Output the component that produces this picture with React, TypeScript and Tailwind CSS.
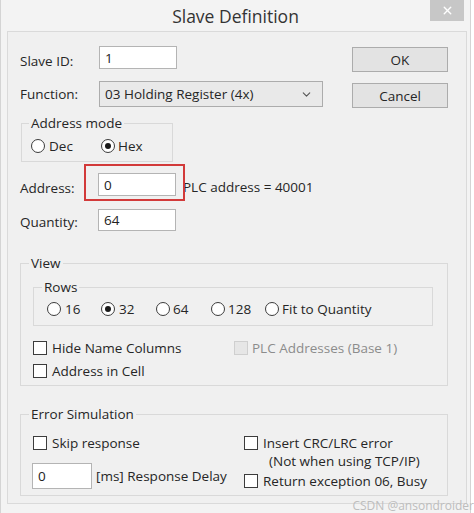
import { X, ChevronDown } from 'lucide-react';

function Radio({ checked = false }: { checked?: boolean }) {
  return (
    <span className="flex h-[14px] w-[14px] shrink-0 items-center justify-center rounded-full border border-[#3c3c3c] bg-white">
      {checked && <span className="h-[6px] w-[6px] rounded-full bg-[#1a1a1a]" />}
    </span>
  );
}

function Check({ disabled = false }: { disabled?: boolean }) {
  return (
    <span
      className={
        disabled
          ? 'block h-[14px] w-[14px] shrink-0 border border-[#cfcfcf] bg-[#e6e6e6]'
          : 'block h-[14px] w-[14px] shrink-0 border border-[#3c3c3c] bg-white'
      }
    />
  );
}

function Field({ value, w, h = 'h-[23px]' }: { value: string; w: string; h?: string }) {
  return (
    <div className={`${w} ${h} flex items-center border border-[#b4b4b4] bg-white pl-[5px] text-[#222]`}>{value}</div>
  );
}

export default function App() {
  return (
    <div className="relative h-[513px] w-[474px] overflow-hidden bg-white font-['Open_Sans',sans-serif] text-[13.5px] leading-[16px] text-[#262626]">
      <div className="h-[513px] w-[471px] border-r border-l border-[#d4d4d4] bg-[#f3f3f3]">
        {/* title bar */}
        <div className="relative flex h-[31px] items-center justify-center text-[17.5px] text-[#333]">
          Slave Definition
          <div className="absolute top-0 left-[429px] flex h-[21px] w-[34px] items-center justify-center bg-[#c7c7c7]">
            <X size={13} strokeWidth={2.6} color="#fff" />
          </div>
        </div>

        {/* client area */}
        <div className="ml-[6px] w-[460px] border border-[#dadada] bg-[#f0f0f0] pt-[14px] pr-[18px] pb-[7px] pl-[12px]">
          <div className="flex justify-between">
            <div>
              <div className="flex h-[23px]">
                <span className="mt-[7px] w-[79px]">Slave ID:</span>
                <Field value="1" w="w-[78px]" />
              </div>
              <div className="mt-[12px] flex h-[26px] items-center">
                <span className="w-[79px]">Function:</span>
                <div className="flex h-[26px] w-[224px] items-center justify-between border border-[#acacac] bg-[#e9e9e9] pr-[9px] pl-[5px]">
                  <span>03 Holding Register (4x)</span>
                  <ChevronDown size={13} strokeWidth={2} color="#555" />
                </div>
              </div>
            </div>
            <div className="mt-[1px] flex flex-col gap-[11px]">
              <div className="flex h-[25px] w-[96px] items-center justify-center border border-[#acacac] bg-[#e3e3e3]">OK</div>
              <div className="flex h-[25px] w-[96px] items-center justify-center border border-[#acacac] bg-[#e3e3e3]">Cancel</div>
            </div>
          </div>

          {/* address mode */}
          <fieldset className="mt-[7px] ml-[1px] w-[152px] border border-[#d9d9d9] pb-[7px] pl-[9px]">
            <legend className="-ml-[2px] px-[2px] leading-[16px]">Address mode</legend>
            <div className="mt-[7px] flex h-[16px] items-center">
              <div className="flex w-[70px] items-center gap-[4px]">
                <Radio />
                <span>Dec</span>
              </div>
              <div className="flex items-center gap-[3px]">
                <Radio checked />
                <span>Hex</span>
              </div>
            </div>
          </fieldset>

          {/* address */}
          <div className="mt-[11px] flex h-[23px] items-center">
            <span className="mt-[6px] w-[78px]">Address:</span>
            <div className="relative">
              <Field value="0" w="w-[78px]" />
              <div className="absolute top-[-9px] left-[-14px] h-[37px] w-[101px] border-2 border-[#d23a3a]" />
            </div>
            <span className="mt-[5px] ml-[7px]">PLC address = 40001</span>
          </div>

          {/* quantity */}
          <div className="mt-[13px] flex h-[22px] items-center">
            <span className="mt-[3px] w-[78px]">Quantity:</span>
            <Field value="64" w="w-[78px]" h="h-[22px]" />
          </div>

          {/* view */}
          <fieldset className="mt-[24px] border border-[#d9d9d9] pr-[14px] pb-[6px] pl-[12px]">
            <legend className="-ml-[4px] px-[2px] leading-[16px]">View</legend>
            <fieldset className="mt-[8px] border border-[#d9d9d9] pb-[8px] pl-[13px]">
              <legend className="-ml-[5px] px-[2px] leading-[16px]">Rows</legend>
              <div className="mt-[6px] flex h-[16px] items-center">
                <div className="flex w-[54px] items-center gap-[4px]">
                  <Radio />
                  <span>16</span>
                </div>
                <div className="flex w-[55px] items-center gap-[4px]">
                  <Radio checked />
                  <span>32</span>
                </div>
                <div className="flex w-[55px] items-center gap-[3px]">
                  <Radio />
                  <span>64</span>
                </div>
                <div className="flex w-[54px] items-center gap-[3px]">
                  <Radio />
                  <span>128</span>
                </div>
                <div className="flex items-center gap-[3px]">
                  <Radio />
                  <span>Fit to Quantity</span>
                </div>
              </div>
            </fieldset>
            <div className="mt-[14px] flex h-[16px] items-center">
              <div className="flex w-[201px] items-center gap-[5px]">
                <Check />
                <span>Hide Name Columns</span>
              </div>
              <div className="flex items-center gap-[4px] text-[#8c8c8c]">
                <Check disabled />
                <span>PLC Addresses (Base 1)</span>
              </div>
            </div>
            <div className="mt-[7px] flex h-[16px] items-center gap-[5px]">
              <Check />
              <span>Address in Cell</span>
            </div>
          </fieldset>

          {/* error simulation */}
          <fieldset className="mt-[20px] border border-[#d9d9d9] pb-[6px] pl-[11px]">
            <legend className="-ml-[3px] px-[2px] leading-[16px]">Error Simulation</legend>
            <div className="mt-[13px] flex">
              <div className="w-[212px]">
                <div className="flex h-[16px] items-center gap-[5px] pl-[1px]">
                  <Check />
                  <span>Skip response</span>
                </div>
                <div className="mt-[12px] flex h-[26px] items-center">
                  <Field value="0" w="w-[60px]" h="h-[26px]" />
                  <span className="ml-[4px]">[ms] Response Delay</span>
                </div>
              </div>
              <div>
                <div className="-mt-[1px] flex items-start gap-[5px]">
                  <div className="mt-[2px]">
                    <Check />
                  </div>
                  <div className="leading-[18px]">
                    <div>Insert CRC/LRC error</div>
                    <div className="ml-[6px]">(Not when using TCP/IP)</div>
                  </div>
                </div>
                <div className="mt-[3px] flex h-[16px] items-center gap-[5px]">
                  <Check />
                  <span>Return exception 06, Busy</span>
                </div>
              </div>
            </div>
          </fieldset>
        </div>
      </div>

      <span className="absolute right-[0px] bottom-[0px] text-[12px] leading-[15px] text-[#bdbdbd]">
        CSDN @ansondroider
      </span>
    </div>
  );
}
